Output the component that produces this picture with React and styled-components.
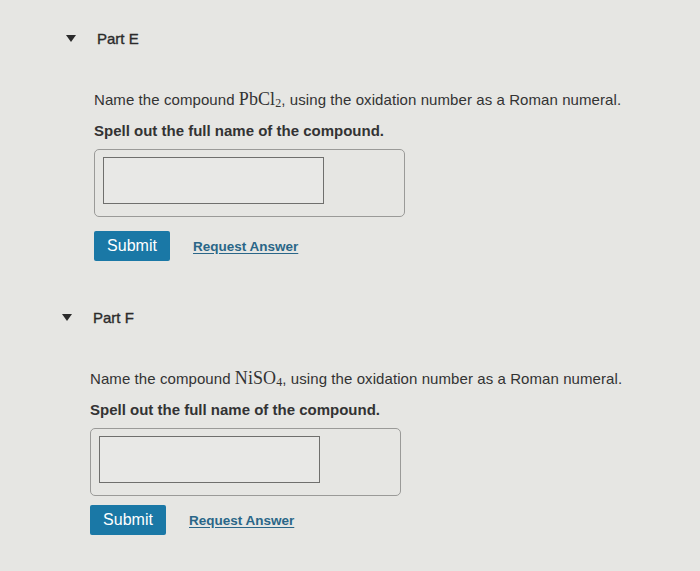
import React from 'react'
import styled, { createGlobalStyle } from 'styled-components'

const GlobalStyle = createGlobalStyle`
  body {
    margin: 0;
    background: #e6e6e3;
    font-family: "Liberation Sans", Arial, sans-serif;
    color: #2e2e2e;
  }
`

const parts = [
  {
    id: 'E',
    shift: 0,
    actionsGap: 14,
    formula: ['PbCl', '2'],
  },
  {
    id: 'F',
    shift: -4,
    actionsGap: 9,
    formula: ['NiSO', '4'],
  },
]

const Part = ({ part }) => (
  <StyledPart $shift={part.shift}>
    <StyledHeader>
      <StyledCaret />
      <span>Part {part.id}</span>
    </StyledHeader>

    <StyledBody>
      <p className="question">
        Name the compound{' '}
        <StyledFormula>
          {part.formula[0]}
          <sub>{part.formula[1]}</sub>
        </StyledFormula>
        , using the oxidation number as a Roman numeral.
      </p>
      <p className="hint">Spell out the full name of the compound.</p>

      <StyledAnswerBox>
        <StyledInput />
      </StyledAnswerBox>

      <StyledActions $gap={part.actionsGap}>
        <StyledSubmit>Submit</StyledSubmit>
        <StyledLink href="#">Request Answer</StyledLink>
      </StyledActions>
    </StyledBody>
  </StyledPart>
)

const App = () => (
  <>
    <GlobalStyle />
    <StyledWrapper>
      {parts.map(p => (
        <Part key={p.id} part={p} />
      ))}
    </StyledWrapper>
  </>
)

export default App

const StyledWrapper = styled.div`
  display: flex;
  flex-direction: column;
  gap: 46px;
  padding: 28px 0 0 0;
  min-height: 571px;
  box-sizing: border-box;
`

const StyledPart = styled.section`
  display: flex;
  flex-direction: column;
  margin-left: ${p => p.$shift}px;
`

const StyledHeader = styled.div`
  display: flex;
  align-items: center;
  height: 20px;
  padding-left: 66px;
  font-size: 15px;
  color: #2b2b2b;
  -webkit-text-stroke: 0.35px #2b2b2b;

  span {
    margin-left: 21px;
  }
`

const StyledCaret = styled.i`
  width: 0;
  height: 0;
  border-left: 5px solid transparent;
  border-right: 5px solid transparent;
  border-top: 7px solid #2b2b2b;
`

const StyledBody = styled.div`
  padding: 41px 0 0 94px;

  p {
    margin: 0;
    font-size: 15px;
    line-height: 20px;
    letter-spacing: 0.08px;
  }

  .question {
    color: #333;
  }

  .hint {
    margin-top: 8px;
    font-weight: 700;
    color: #333;
    letter-spacing: 0;
  }
`

const StyledFormula = styled.span`
  font-family: "Liberation Serif", "Times New Roman", serif;
  font-size: 18px;

  sub {
    font-size: 12px;
    vertical-align: -2px;
  }
`

const StyledAnswerBox = styled.div`
  margin-top: 8px;
  width: 311px;
  height: 68px;
  box-sizing: border-box;
  border: 1px solid #9a9a98;
  border-radius: 5px;
  padding: 7px 8px;
`

const StyledInput = styled.div`
  width: 221px;
  height: 47px;
  box-sizing: border-box;
  border: 1px solid #6f6f6d;
  background: #e8e8e6;
`

const StyledActions = styled.div`
  display: flex;
  align-items: center;
  gap: 23px;
  margin-top: ${p => p.$gap}px;
`

const StyledSubmit = styled.button`
  width: 76px;
  height: 30px;
  border: none;
  border-radius: 2px;
  background: #1a78a6;
  color: #fff;
  font-family: "Liberation Sans", Arial, sans-serif;
  font-size: 16px;
  padding: 0;
`

const StyledLink = styled.a`
  color: #2a6688;
  font-size: 13.5px;
  font-weight: 700;
  text-decoration: underline;
  text-underline-offset: 2px;
`
